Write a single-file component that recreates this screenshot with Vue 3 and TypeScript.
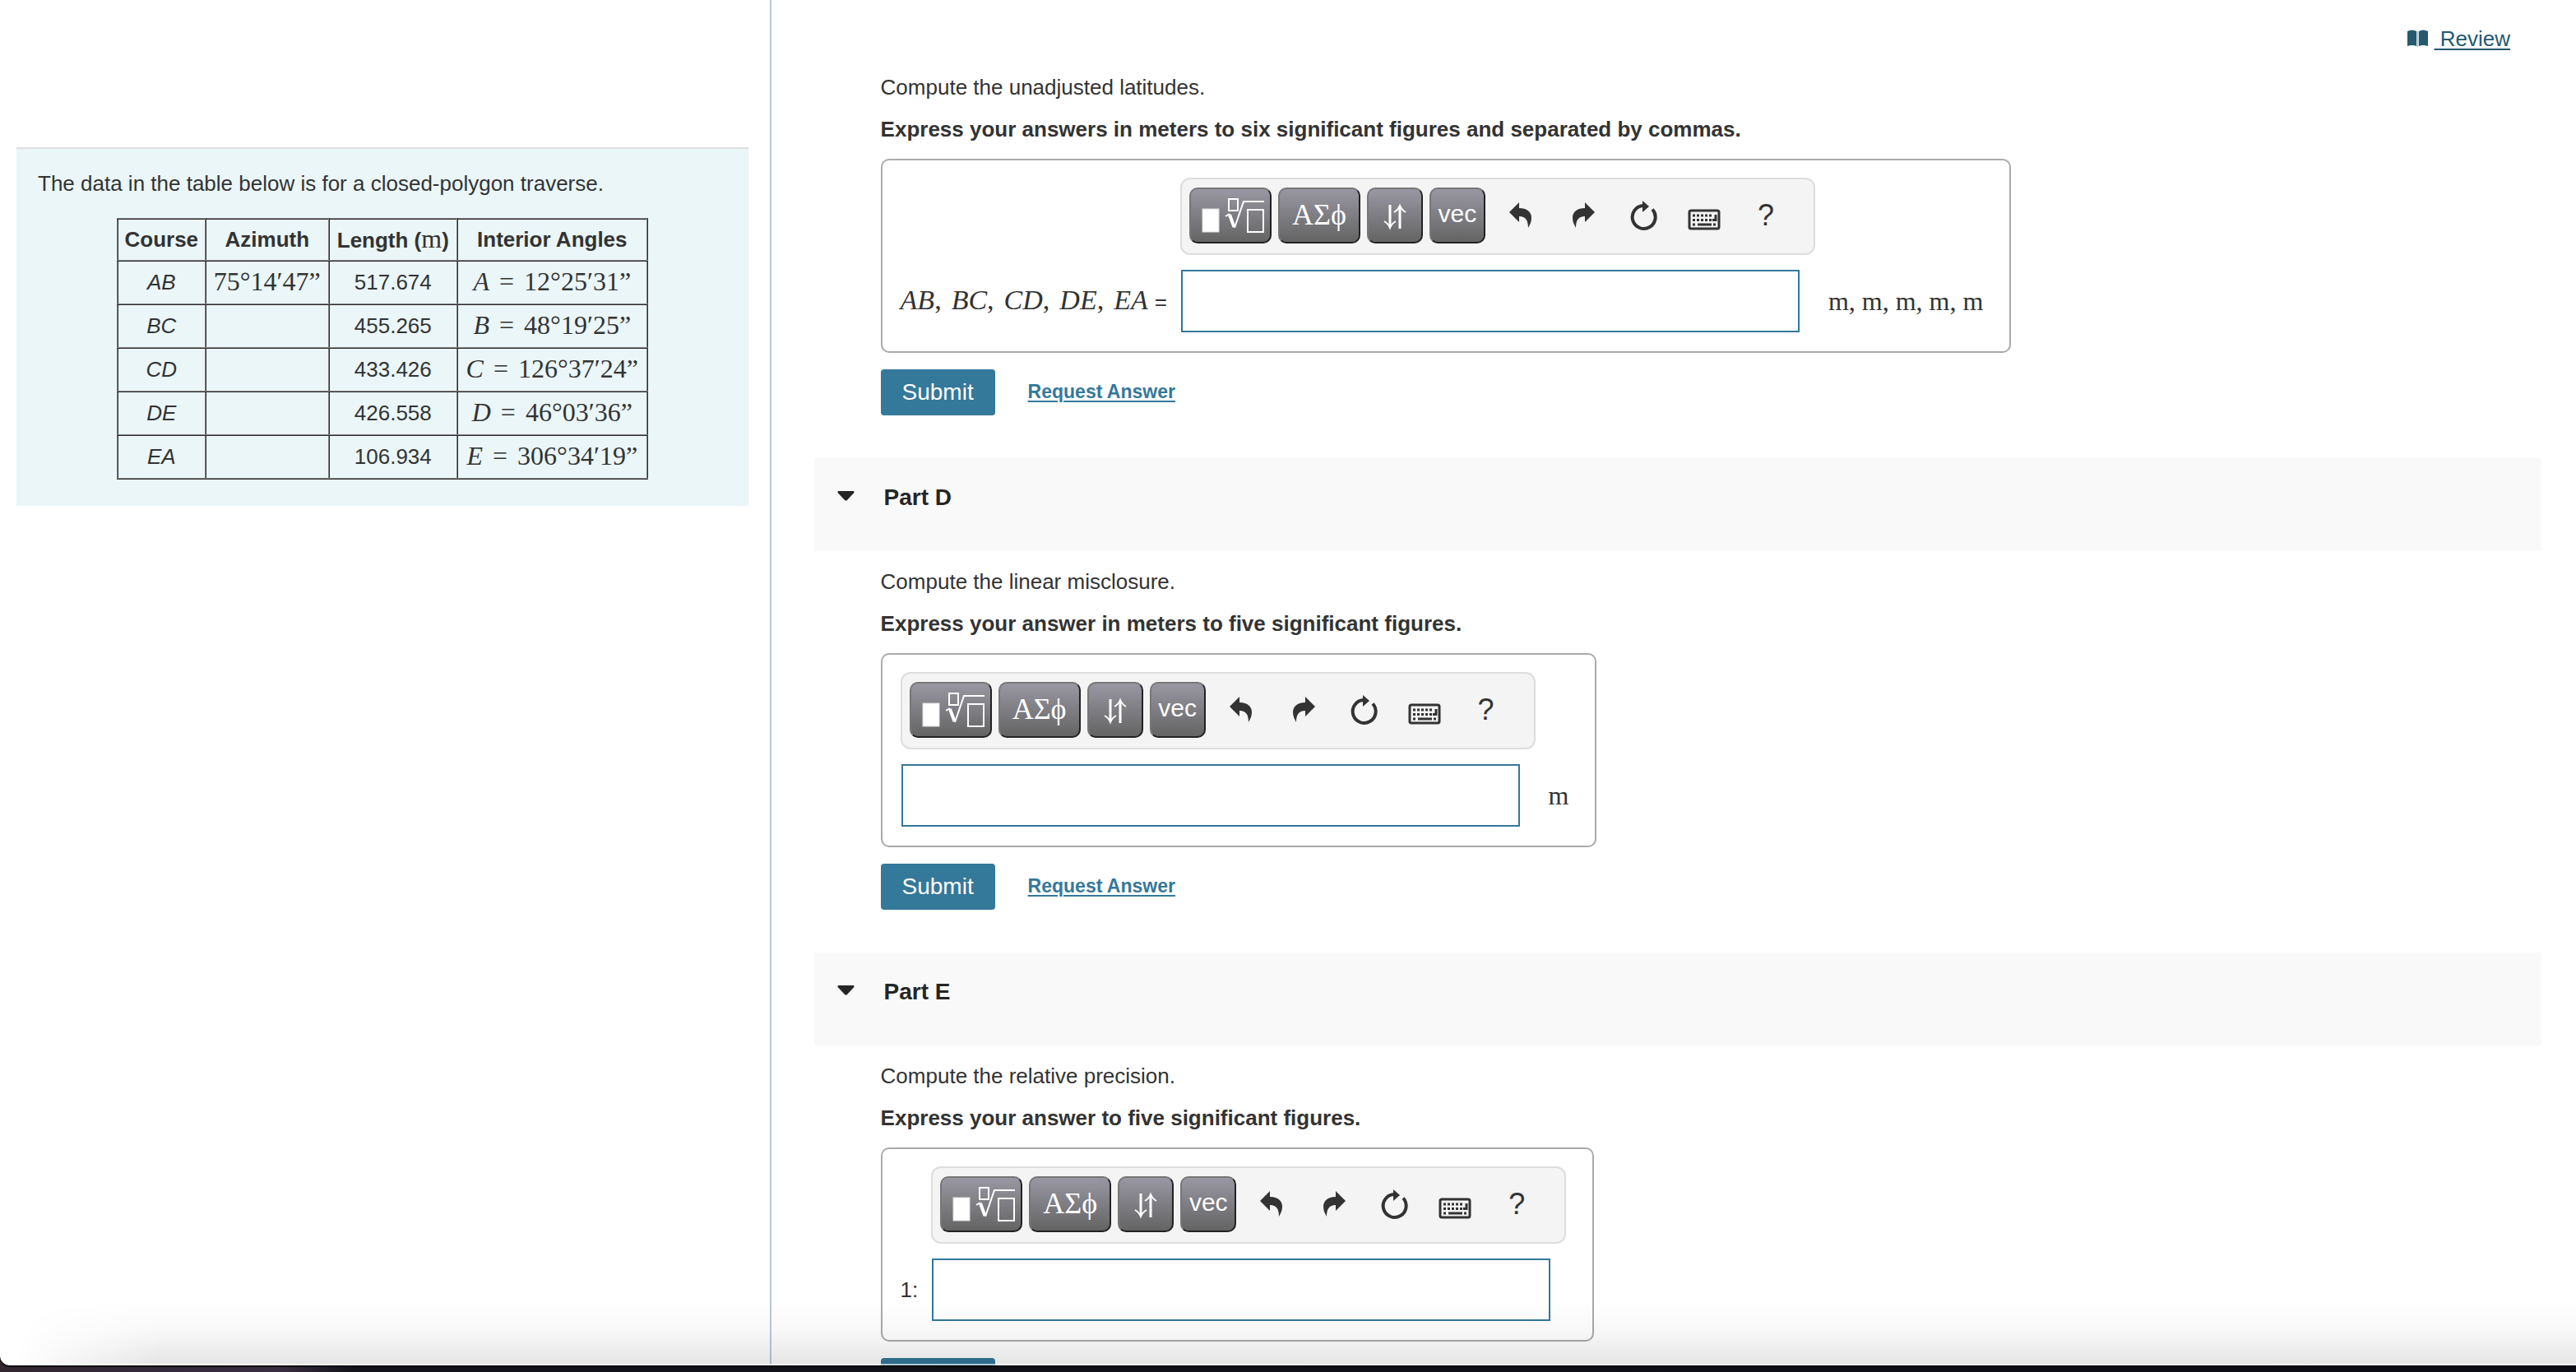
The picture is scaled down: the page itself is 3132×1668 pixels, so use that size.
<script setup lang="ts">
interface Course {
  name: string
  azimuth: string
  length: string
  corner: string
  angle: string
}

interface Part {
  id: string
  title?: string
  question: string
  instruction: string
  variables?: string[]
  prefix?: string
  units: string[]
}

const courses: Course[] = [
  { name: 'AB', azimuth: '75°14′47”', length: '517.674', corner: 'A', angle: '12°25′31”' },
  { name: 'BC', azimuth: '', length: '455.265', corner: 'B', angle: '48°19′25”' },
  { name: 'CD', azimuth: '', length: '433.426', corner: 'C', angle: '126°37′24”' },
  { name: 'DE', azimuth: '', length: '426.558', corner: 'D', angle: '46°03′36”' },
  { name: 'EA', azimuth: '', length: '106.934', corner: 'E', angle: '306°34′19”' },
]

const parts: Part[] = [
  {
    id: 'c',
    question: 'Compute the unadjusted latitudes.',
    instruction: 'Express your answers in meters to six significant figures and separated by commas.',
    variables: ['AB', 'BC', 'CD', 'DE', 'EA'],
    units: ['m', 'm', 'm', 'm', 'm'],
  },
  {
    id: 'd',
    title: 'Part D',
    question: 'Compute the linear misclosure.',
    instruction: 'Express your answer in meters to five significant figures.',
    units: ['m'],
  },
  {
    id: 'e',
    title: 'Part E',
    question: 'Compute the relative precision.',
    instruction: 'Express your answer to five significant figures.',
    prefix: '1:',
    units: [],
  },
]
</script>

<template>
  <div class="desktop">
    <div class="window">
      <aside class="problem-pane">
        <section class="problem">
          <p>The data in the table below is for a closed-polygon traverse.</p>
          <table>
            <colgroup>
              <col class="col-course" />
              <col class="col-azimuth" />
              <col class="col-length" />
              <col class="col-angles" />
            </colgroup>
            <thead>
              <tr>
                <th scope="col">Course</th>
                <th scope="col">Azimuth</th>
                <th scope="col">Length (<span class="math">m</span>)</th>
                <th scope="col">Interior Angles</th>
              </tr>
            </thead>
            <tbody>
              <tr v-for="course in courses" :key="course.name">
                <td><em>{{ course.name }}</em></td>
                <td><span class="math">{{ course.azimuth }}</span></td>
                <td>{{ course.length }}</td>
                <td>
                  <span class="math"><i>{{ course.corner }}</i><span class="equals">=</span>{{ course.angle }}</span>
                </td>
              </tr>
            </tbody>
          </table>
        </section>
      </aside>

      <main class="answer-pane">
        <nav class="review-bar">
          <a href="#review" class="review">
            <svg width="25" height="22" viewBox="0 0 25 22" aria-hidden="true">
              <path d="M0 2Q6 -1 11 2V20Q6 18 0 20ZM14 2Q19 -1 25 2V20Q19 18 14 20Z" fill="#24596e" />
              <path d="M12.500 2V21" stroke="#a9c0c9" stroke-width="2" />
            </svg>
            <span>&nbsp;Review</span>
          </a>
        </nav>

        <section v-for="part in parts" :key="part.id">
          <h2 v-if="part.title">
            <button type="button" class="part-header">
              <svg width="21" height="12" viewBox="0 0 21 12" aria-hidden="true">
                <path d="M1.500 0H19.500Q21.500 .5 20 2.500L12 11Q10.500 12.500 9 11L1 2.500Q-.5 .5 1.500 0Z" fill="#252525" />
              </svg>
              {{ part.title }}
            </button>
          </h2>
          <div class="part-body">
            <p>{{ part.question }}</p>
            <p class="instruction">{{ part.instruction }}</p>

            <div class="answer-box">
              <label v-if="part.variables" :for="`answer-${part.id}`" class="prefix">
                <span class="math list variables"><span v-for="(v, i) in part.variables" :key="v"><i>{{ v }}</i>{{ i < part.variables.length - 1 ? ',' : '' }}</span></span>
                <span>=</span>
              </label>
              <label v-else-if="part.prefix" :for="`answer-${part.id}`" class="prefix">{{ part.prefix }}</label>

              <div class="toolbar" role="toolbar">
                <button type="button" class="key wide" aria-label="Templates">
                  <svg width="96" height="64" viewBox="2 2 96 64" fill="none" stroke="#fff" aria-hidden="true">
                    <rect x="16" y="26" width="20" height="28" fill="#fff" stroke="#ddd" />
                    <rect x="48" y="14" width="11" height="14" stroke-width="2" />
                    <path d="M44 35L49 32" stroke-width="2" />
                    <path d="M49 33L54.500 48" stroke-width="4" />
                    <path d="M55 49L66 17H91" stroke-width="2" />
                    <rect x="71" y="27" width="19" height="27" stroke-width="2" />
                  </svg>
                </button>
                <button type="button" class="key wide greek">ΑΣϕ</button>
                <button type="button" class="key" aria-label="Arrows">
                  <svg width="64" height="64" viewBox="2 2 64 64" fill="none" stroke="#fff" stroke-width="3" aria-hidden="true">
                    <path d="M28 21V48M40 50V23" />
                    <path d="M21 41Q26 44 28 49Q30 44 35 41M33 30Q38 27 40 22Q42 27 47 30" stroke-width="2" />
                  </svg>
                </button>
                <button type="button" class="key vec">vec</button>
                <span class="actions">
                  <button type="button" aria-label="Undo">
                    <svg width="74" height="68" viewBox="2 0 74 68" aria-hidden="true">
                      <path d="M23 30L35 18V25C45 25 50 30 50 37C50 42 48 45 46 49C46 40 43 35 35 35V42Z" />
                    </svg>
                  </button>
                  <button type="button" aria-label="Redo">
                    <svg width="74" height="68" viewBox="2 0 74 68" aria-hidden="true">
                      <path d="M53 30L41 18V25C31 25 26 30 26 37C26 42 28 45 30 49C30 40 33 35 41 35V42Z" />
                    </svg>
                  </button>
                  <button type="button" aria-label="Reset">
                    <svg width="74" height="68" viewBox="3 0 74 68" aria-hidden="true">
                      <path d="M50 26.500A14 14 0 1 1 38.500 22" fill="none" stroke="#333" stroke-width="4" />
                      <path d="M38 16L46 23L38 30Z" />
                    </svg>
                  </button>
                  <button type="button" aria-label="Keyboard">
                    <svg width="74" height="68" viewBox="2 0 74 68" aria-hidden="true">
                      <rect x="20" y="28" width="36" height="22" rx="2" fill="none" stroke="#333" stroke-width="3" />
                      <path d="M24 34H49M24 39.500H49M24 45H27M49 45H53" fill="none" stroke="#333" stroke-width="3" stroke-dasharray="3 2" />
                      <path d="M30 45H47M48 39.500H52V33" fill="none" stroke="#333" stroke-width="3" />
                    </svg>
                  </button>
                  <button type="button" class="help" aria-label="Help">?</button>
                </span>
              </div>

              <input :id="`answer-${part.id}`" type="text" :aria-label="part.question" />

              <span v-if="part.units.length" class="math list units"><span v-for="(u, i) in part.units" :key="i">{{ u }}{{ i < part.units.length - 1 ? ',' : '' }}</span></span>
            </div>

            <div class="submit-row">
              <button type="button" class="submit">Submit</button>
              <a href="#request" class="request">Request Answer</a>
            </div>
          </div>
        </section>
      </main>

      <div class="shade"></div>
    </div>
  </div>
</template>

<style>
body {
  margin: 0;
  overflow: hidden;
}
</style>

<style scoped>
.desktop {
  box-sizing: border-box;
  height: 100vh;
  padding-bottom: 8px;
  background: linear-gradient(to right, #33262f, #33293c 200px, #3a2d42 340px, #11121a 430px, #0b0c14);
  font: 26px/30px "Liberation Sans", Arial, sans-serif;
  color: #333;
}

.window {
  position: relative;
  display: flex;
  height: 100%;
  overflow: hidden;
  background: #fff;
  border-radius: 0 0 0 12px;
  box-shadow: 0 2px 0 #000;
}

p,
h2 {
  margin: 0;
}

button {
  margin: 0;
  padding: 0;
  border: 0;
  background: none;
  color: inherit;
  font: inherit;
}

svg {
  display: block;
}

.math {
  font-family: "Liberation Serif", "Times New Roman", serif;
  font-size: 32px;
  font-weight: 400;
}

/* Problem statement */
.problem-pane {
  box-sizing: border-box;
  flex: 0 0 calc(30% - 2px);
  padding: 179px 26px 0 20px;
  border-right: 2px solid #b9cadb;
}

.problem {
  padding: 27px 26px 32px;
  border-top: 2px solid #dfdfdf;
  background: #eaf6f8;
}

table {
  width: 646px;
  margin: 27px auto 0;
  border-collapse: collapse;
  table-layout: fixed;
  text-align: center;
}

.col-course { width: 107px; }
.col-azimuth { width: 150px; }
.col-length { width: 156px; }
.col-angles { width: 231px; }

th,
td {
  box-sizing: border-box;
  height: 53px;
  padding: 0 0 2px;
  border: 2px inset #808080;
  white-space: nowrap;
}

th {
  height: 51px;
}

.equals {
  margin: 0 12px;
}

/* Answer column */
.answer-pane {
  flex: 1;
  min-width: 0;
  padding: 0 42px 0 52px;
}

.review-bar {
  display: flex;
  justify-content: flex-end;
  box-sizing: border-box;
  height: 69px;
  padding: 32px 38px 0 0;
}

.review {
  display: flex;
  gap: 8px;
  color: #24596e;
  text-decoration: none;
}

.review svg {
  margin-top: 4px;
}

.review span {
  text-decoration: underline;
  text-decoration-thickness: 2px;
  text-underline-offset: 3px;
}

.part-header {
  display: flex;
  align-items: flex-start;
  gap: 36px;
  box-sizing: border-box;
  width: 100%;
  height: 113px;
  padding: 32px 28px;
  background: #f9f9f9;
  color: #252525;
  font-size: 28px;
  font-weight: 700;
  line-height: 32px;
}

.part-header svg {
  margin-top: 8px;
}

.part-body {
  padding: 22px 0 52px 81px;
}

.instruction {
  margin: 21px 0;
  font-weight: 700;
}

.answer-box {
  display: inline-grid;
  grid-template-columns: auto 772px auto;
  row-gap: 18px;
  align-items: center;
  box-sizing: border-box;
  padding: 21px 32px 23px 22px;
  border: 2px solid #aaa;
  border-radius: 10px;
  vertical-align: top;
}

.prefix {
  grid-area: 2 / 1;
  display: flex;
  align-items: baseline;
  gap: 8px;
  padding-right: 16px;
}

.list {
  display: flex;
  gap: 8px;
}

.variables {
  gap: 12px;
  font-size: 34px;
}

.toolbar {
  grid-area: 1 / 2;
  display: flex;
  align-items: center;
  gap: 8px;
  box-sizing: border-box;
  height: 94px;
  padding: 0 9px 2px;
  border: 2px solid #ddd;
  border-radius: 12px;
  background: #f4f4f4;
}

.key {
  box-sizing: border-box;
  width: 68px;
  height: 68px;
  border: 2px solid;
  border-color: #777 #222 #222 #777;
  border-radius: 10px;
  background: linear-gradient(#9997a2, #646464);
  color: #fff;
}

.wide {
  width: 100px;
}

.greek {
  padding-bottom: 2px;
  font-family: "Liberation Serif", "Times New Roman", serif;
  font-size: 36px;
}

.vec {
  padding-bottom: 4px;
  font-size: 30px;
}

.actions {
  display: flex;
}

.actions button {
  width: 74px;
  height: 68px;
}

.actions path {
  fill: #333;
}

.actions path[fill="none"] {
  fill: none;
}

.help {
  font-size: 36px;
}

input {
  grid-area: 2 / 2;
  box-sizing: border-box;
  width: 752px;
  height: 76px;
  margin: 0 0 0 1px;
  padding: 0 12px;
  border: 2px solid #34789a;
  background: transparent;
  font: inherit;
}

.units {
  grid-area: 2 / 3;
  margin-left: 16px;
}

.submit-row {
  display: flex;
  align-items: center;
  gap: 40px;
  margin-top: 20px;
}

.submit {
  width: 139px;
  height: 56px;
  border-radius: 4px;
  background: #34789a;
  color: #fff;
  font-size: 28px;
}

.request {
  padding-bottom: 2px;
  color: #34789a;
  font-size: 23px;
  font-weight: 700;
  text-decoration-thickness: 2px;
  text-underline-offset: 3px;
}

/* Soft shadow cast over the bottom edge of the window */
.shade {
  position: absolute;
  inset: auto 0 0;
  height: 76px;
  border-bottom: 2px solid rgba(255, 255, 255, 0.6);
  background: linear-gradient(transparent, rgba(0, 0, 0, 0.03) 50%, rgba(0, 0, 0, 0.1));
  mask-image: linear-gradient(100deg, transparent 30px, #000 200px);
  pointer-events: none;
}
</style>
